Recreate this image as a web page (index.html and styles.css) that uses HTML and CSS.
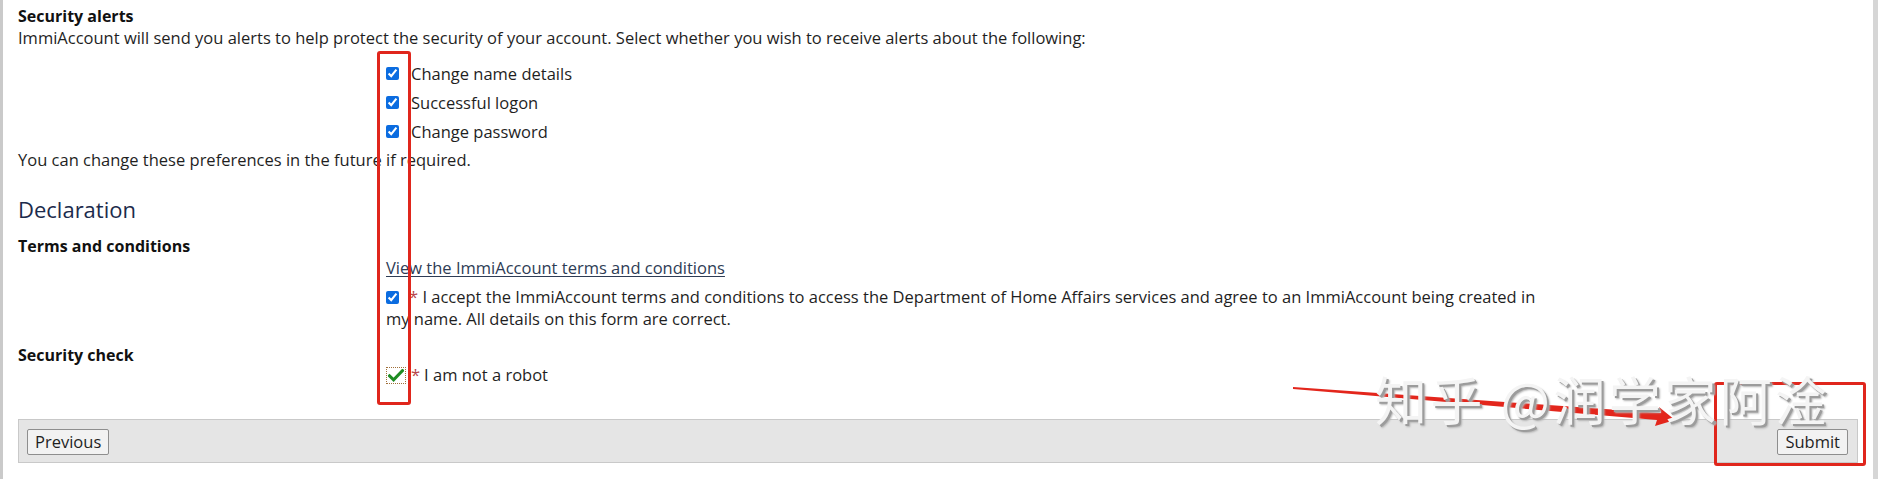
FILE: index.html
```html
<!DOCTYPE html>
<html lang="en">
<head>
<meta charset="utf-8">
<title>ImmiAccount - Security alerts and declaration</title>
<link rel="stylesheet" href="styles.css">
</head>
<body>
<div class="page">
  <section class="alerts">
    <h3 class="strong-label">Security alerts</h3>
    <p class="text">ImmiAccount will send you alerts to help protect the security of your account. Select whether you wish to receive alerts about the following:</p>
    <div class="field-row">
      <div class="field-label"></div>
      <ul class="checklist">
        <li><input type="checkbox" class="cb" checked><span>Change name details</span></li>
        <li><input type="checkbox" class="cb" checked><span>Successful logon</span></li>
        <li><input type="checkbox" class="cb" checked><span>Change password</span></li>
      </ul>
    </div>
    <p class="text note">You can change these preferences in the future if required.</p>
  </section>

  <h2 class="section-title">Declaration</h2>

  <div class="field-row terms">
    <div class="field-label strong-label">Terms and conditions</div>
    <div class="field-control terms-control">
      <a class="terms-link" href="#">View the ImmiAccount terms and conditions</a>
      <label class="accept"><input type="checkbox" class="cb cb-inline" checked><span class="req">*</span> I accept the ImmiAccount terms and conditions to access the Department of Home Affairs services and agree to an ImmiAccount being created in my name. All details on this form are correct.</label>
    </div>
  </div>

  <div class="field-row check">
    <div class="field-label strong-label">Security check</div>
    <div class="field-control robot">
      <span class="robot-box"><svg width="16" height="13" viewBox="0 0 16 13"><path d="M1.5 6.8 L5.6 10.8 L14.5 1.6" fill="none" stroke="#1e8c23" stroke-width="3" stroke-linecap="square"/></svg></span>
      <span class="req">*</span><span class="robot-text">I am not a robot</span>
    </div>
  </div>

  <div class="actions">
    <button class="btn" type="button">Previous</button>
    <button class="btn" type="button">Submit</button>
  </div>
</div>

<div class="annot annot-box-checks"></div>
<div class="annot annot-box-submit"></div>
<svg class="annot-arrow" width="420" height="50" viewBox="0 0 420 50">
  <polygon points="0,1 368,27 366,21 382,34 362,40 364,34 0,3" fill="#e3261c"/>
</svg>
<div class="watermark">知乎 @润学家阿淦</div>
</body>
</html>
```

FILE: styles.css
```css
html, body {
  margin: 0;
  padding: 0;
  background: #ffffff;
}

body {
  width: 1878px;
  height: 479px;
  overflow: hidden;
  position: relative;
  font-family: "Open Sans", "Noto Sans", "Liberation Sans", sans-serif;
  font-size: 16.5px;
  line-height: 22px;
  color: #1f1f1f;
}

.page {
  box-sizing: border-box;
  height: 479px;
  border-left: 3px solid #cacaca;
  border-right: 5px solid #d6d6d6;
  padding: 5px 15px 0 15px;
}

.strong-label {
  margin: 0;
  font-size: 16px;
  font-weight: 700;
  line-height: 22px;
  color: #111111;
}

.text {
  margin: 0;
}

.field-row {
  display: grid;
  grid-template-columns: 368px 1fr;
}

.checklist {
  list-style: none;
  margin: 10px 0 0 0;
  padding: 0;
}

.checklist li {
  display: flex;
  align-items: center;
  height: 29px;
}

.cb {
  width: 13px;
  height: 13px;
  margin: 0 12px 0 0;
  accent-color: #0b6ce0;
}

.note {
  margin-top: 3px;
}

.section-title {
  margin: 24px 0 0 0;
  font-size: 22px;
  font-weight: 400;
  line-height: 28px;
  color: #1c2b4c;
}

.terms {
  margin-top: 12px;
}

.terms-control {
  padding-top: 22px;
  display: flex;
  flex-direction: column;
  align-items: flex-start;
}

.terms-link {
  color: #2e3c55;
  text-decoration: underline;
  text-underline-offset: 2px;
}

.accept {
  display: block;
  margin-top: 7px;
  max-width: 1162px;
}

.cb-inline {
  margin: 0 10px 0 0;
  vertical-align: -1px;
}

.req {
  color: #b8454a;
}

.check {
  margin-top: 14px;
}

.robot {
  padding-top: 20px;
  display: flex;
  align-items: center;
  height: 22px;
}

.robot-box {
  box-sizing: border-box;
  width: 20px;
  height: 17px;
  border: 1px dotted #a0703a;
  display: flex;
  align-items: center;
  justify-content: center;
  margin-right: 5px;
}

.robot-text {
  margin-left: 4px;
}

.actions {
  margin-top: 33px;
  box-sizing: border-box;
  height: 44px;
  background: #e5e5e5;
  border: 1px solid #c9c9c9;
  padding: 9px 9px 0 8px;
  display: flex;
  justify-content: space-between;
  align-items: flex-start;
}

.btn {
  box-sizing: border-box;
  height: 26px;
  padding: 0 7px;
  font-family: "Open Sans", "Noto Sans", "Liberation Sans", sans-serif;
  font-size: 16.5px;
  line-height: 22px;
  color: #1f1f1f;
  background: #f2f2f2;
  border: 1px solid #8e8e8e;
  border-radius: 2px;
}

/* screenshot annotations (overlay) */
.annot {
  position: absolute;
  box-sizing: border-box;
  border: 3px solid #e0261c;
  border-radius: 3px;
}

.annot-box-checks {
  left: 377px;
  top: 51px;
  width: 34px;
  height: 354px;
}

.annot-box-submit {
  left: 1714px;
  top: 382px;
  width: 152px;
  height: 84px;
}

.annot-arrow {
  position: absolute;
  left: 1293px;
  top: 386px;
}

.watermark {
  position: absolute;
  left: 1375px;
  top: 375px;
  font-family: "Noto Sans CJK SC", "Noto Sans", sans-serif;
  font-size: 52px;
  line-height: 48px;
  letter-spacing: 3.4px;
  color: #f4f4f4;
  white-space: nowrap;
  text-shadow: 2px 2px 0 #9c9c9c, 3px 3px 2px #b4b4b4;
}
```
